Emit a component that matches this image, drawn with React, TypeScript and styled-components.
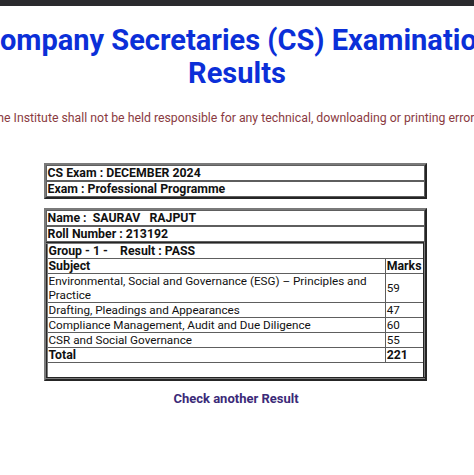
import React from "react";
import styled, { createGlobalStyle } from "styled-components";

const Global = createGlobalStyle`
  html, body { margin: 0; padding: 0; background: #fff; }
  body { font-family: Roboto, "Liberation Sans", Arial, sans-serif; overflow-x: hidden; }
`;

const Page = styled.div`
  width: 474px;
  overflow: hidden;
  display: flex;
  flex-direction: column;
  align-items: center;
`;

const TopBar = styled.div`
  align-self: stretch;
  height: 6px;
  background: #2a2a2e;
`;

const Title = styled.h1`
  flex: none;
  width: 580px;
  margin: 18px 0 0;
  text-align: center;
  color: #0b2fd8;
  font-size: 29px;
  line-height: 33px;
  font-weight: 700;
`;

const Disclaimer = styled.p`
  flex: none;
  width: 580px;
  margin: 20px 0 0;
  text-align: center;
  color: #8a3b3f;
  font-size: 12.3px;
  line-height: 16px;
`;

const Table = styled.table<{ $mt: number }>`
  width: 383px;
  margin-top: ${(p) => p.$mt}px;
  margin-right: 4px;
  border: 2px outset #7a7a7a;
  border-collapse: separate;
  border-spacing: 0;
  color: #111;
`;

const Cell = styled.td<{ $bold?: boolean }>`
  border: 1px solid #5e5e5e;
  padding: 0 1px;
  line-height: 14px;
  font-size: ${(p) => (p.$bold ? "12.3px" : "11.7px")};
  font-weight: ${(p) => (p.$bold ? 700 : 400)};
  text-align: left;
  vertical-align: middle;
`;

const InnerTable = styled.table`
  width: 100%;
  border: 2px outset #7a7a7a;
  border-collapse: collapse;
`;

const NestCell = styled.td`
  padding: 0;
  border: 0;
`;

const MarkCell = styled(Cell)`
  width: 31px;
`;

const Link = styled.a`
  margin-top: 10px;
  margin-right: 2px;
  color: #3b2a78;
  font-weight: 700;
  font-size: 13px;
  text-decoration: none;
`;

const subjects = [
  ["Environmental, Social and Governance (ESG) \u2013 Principles and Practice", "59"],
  ["Drafting, Pleadings and Appearances", "47"],
  ["Compliance Management, Audit and Due Diligence", "60"],
  ["CSR and Social Governance", "55"],
];

export default function App() {
  return (
    <>
      <Global />
      <Page>
        <TopBar />
        <Title>Company Secretaries (CS) Examination Results</Title>
        <Disclaimer>
          The Institute shall not be held responsible for any technical, downloading or printing errors.
        </Disclaimer>
        <Table $mt={37}>
          <tbody>
            <tr><Cell $bold>CS Exam : DECEMBER 2024</Cell></tr>
            <tr><Cell $bold>Exam : Professional Programme</Cell></tr>
          </tbody>
        </Table>
        <Table $mt={9}>
          <tbody>
            <tr><Cell $bold>Name :&nbsp; SAURAV&nbsp;&nbsp; RAJPUT</Cell></tr>
            <tr><Cell $bold>Roll Number : 213192</Cell></tr>
            <tr>
              <NestCell>
                <InnerTable>
                  <tbody>
                    <tr><Cell $bold colSpan={2}>Group - 1 -&nbsp;&nbsp;&nbsp; Result : PASS</Cell></tr>
                    <tr><Cell $bold>Subject</Cell><MarkCell $bold>Marks</MarkCell></tr>
                    {subjects.map(([s, m]) => (
                      <tr key={s}><Cell>{s}</Cell><MarkCell>{m}</MarkCell></tr>
                    ))}
                    <tr><Cell $bold>Total</Cell><MarkCell $bold>221</MarkCell></tr>
                    <tr><Cell colSpan={2}>&nbsp;</Cell></tr>
                  </tbody>
                </InnerTable>
              </NestCell>
            </tr>
          </tbody>
        </Table>
        <Link href="#">Check another Result</Link>
      </Page>
    </>
  );
}
